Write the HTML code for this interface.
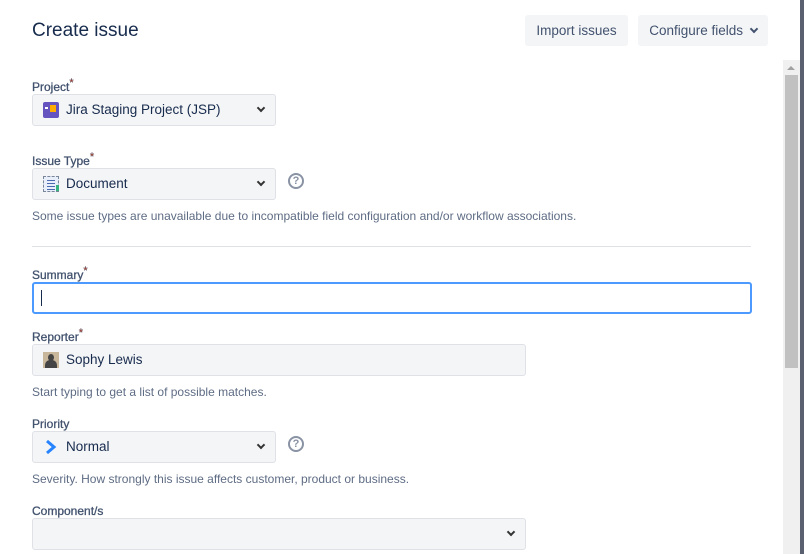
<!DOCTYPE html>
<html><head><style>
*{box-sizing:border-box;margin:0;padding:0}
body{width:804px;height:554px;overflow:hidden;background:#fff;font-family:"Liberation Sans",sans-serif;color:#172b4d;position:relative}
.t{position:absolute;left:32px;top:20px;font-size:19px;color:#172b4d}
.btn{position:absolute;top:15px;height:31px;background:#f4f5f7;border-radius:3px;font-size:13.5px;color:#42526e;line-height:31px;text-align:center;white-space:nowrap}
.lab{position:absolute;left:32px;font-size:12px;color:#42526e;-webkit-text-stroke:0.3px #42526e}
.lab i{color:#de350b;font-style:normal;position:relative;top:-5px;font-size:11px}
.f{position:absolute;left:32px;height:32px;background:#f4f5f7;border:1px solid #dfe1e6;border-radius:3px;font-size:13.5px;line-height:30px;padding-left:33px;color:#172b4d;white-space:nowrap}
.ch{position:absolute;right:11px;width:6px;height:6px;border-right:2px solid #333;border-bottom:2px solid #333;transform:rotate(45deg);top:10px}
.help{position:absolute;left:288px;width:16px;height:16px;border:2px solid #8993a4;border-radius:50%;font-size:11px;font-weight:bold;color:#8993a4;text-align:center;line-height:12px}
.d{position:absolute;left:32px;font-size:12px;color:#5e6c84;white-space:nowrap}
.ic{position:absolute;left:10px;top:7px;width:16px;height:16px}
</style></head><body>
<div class="t">Create issue</div>
<div class="btn" style="left:525px;width:103px">Import issues</div>
<div class="btn" style="left:638px;width:130px">Configure fields <span style="display:inline-block;width:6px;height:6px;border-right:2px solid #42526e;border-bottom:2px solid #42526e;transform:rotate(45deg);margin-left:4px;position:relative;top:-3px"></span></div>

<div class="lab" style="top:80px">Project<i>*</i></div>
<div class="f" style="top:94px;width:244px"><div class="ic" style="background:#6554c0;border-radius:2px"><div style="position:absolute;left:7px;top:3px;width:6px;height:7px;background:#ffab00"></div><div style="position:absolute;left:2px;top:5px;width:3px;height:2px;background:#fff"></div></div>Jira Staging Project (JSP)<div class="ch"></div></div>

<div class="lab" style="top:154px">Issue Type<i>*</i></div>
<div class="f" style="top:168px;width:244px"><div class="ic" style="border:1px dashed #7a869a;background:#e8eefa"><div style="position:absolute;left:3px;top:3px;width:8px;height:1px;background:#4a6ab0;box-shadow:0 3px #4a6ab0,0 6px #4a6ab0,0 9px #4a6ab0"></div><div style="position:absolute;right:-1px;bottom:0;width:3px;height:6px;background:#36b37e"></div></div>Document<div class="ch"></div></div>
<div class="help" style="top:173px">?</div>
<div class="d" style="top:209px">Some issue types are unavailable due to incompatible field configuration and/or workflow associations.</div>
<div style="position:absolute;left:32px;top:246px;width:719px;height:1px;background:#dfe1e6"></div>

<div class="lab" style="top:268px">Summary<i>*</i></div>
<div style="position:absolute;left:32px;top:282px;width:720px;height:32px;border:2px solid #4c9aff;border-radius:3px;background:#fff"><div style="position:absolute;left:7px;top:6px;width:1px;height:16px;background:#172b4d"></div></div>

<div class="lab" style="top:330px">Reporter<i>*</i></div>
<div class="f" style="top:344px;width:494px"><div class="ic" style="background:#c9b79c;overflow:hidden"><div style="position:absolute;left:5px;top:2px;width:6px;height:7px;background:#444;border-radius:50%"></div><div style="position:absolute;left:2px;top:8px;width:12px;height:10px;background:#444;border-radius:5px 5px 0 0"></div></div>Sophy Lewis</div>
<div class="d" style="top:385px">Start typing to get a list of possible matches.</div>

<div class="lab" style="top:417px">Priority</div>
<div class="f" style="top:431px;width:244px"><svg class="ic" viewBox="0 0 16 16"><path d="M4 2 L11 8 L4 14" fill="none" stroke="#2684ff" stroke-width="3"/></svg>Normal<div class="ch"></div></div>
<div class="help" style="top:436px">?</div>
<div class="d" style="top:472px">Severity. How strongly this issue affects customer, product or business.</div>

<div class="lab" style="top:504px">Component/s</div>
<div class="f" style="top:518px;width:494px"><div class="ch"></div></div>

<div style="position:absolute;left:783px;top:60px;width:17px;height:494px;background:#f0f0f0"></div>
<div style="position:absolute;left:787px;top:66px;width:0;height:0;border-left:4px solid transparent;border-right:4px solid transparent;border-bottom:4px solid #a0a0a0"></div>
<div style="position:absolute;left:785px;top:75px;width:13px;height:293px;background:#c1c1c1"></div>
<div style="position:absolute;left:800px;top:0;width:4px;height:554px;background:#5a6070"></div>
</body></html>
